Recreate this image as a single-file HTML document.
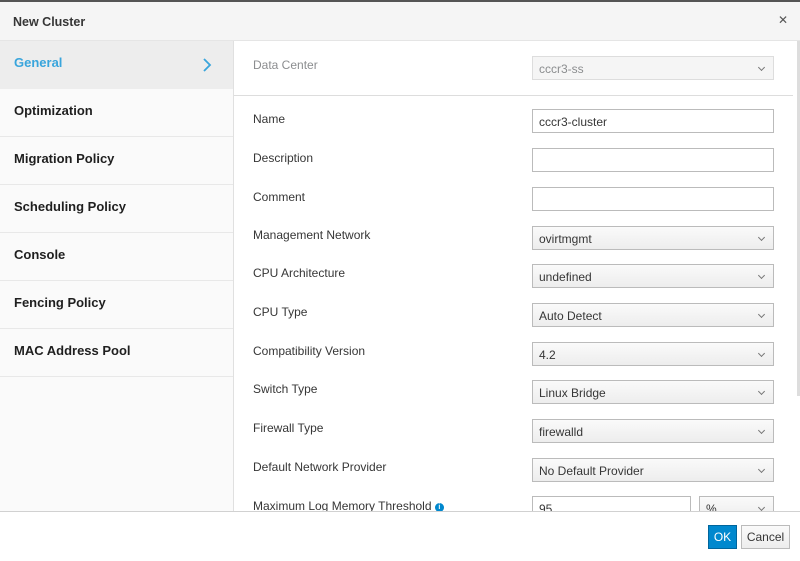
<!DOCTYPE html>
<html><head><meta charset="utf-8"><style>
*{margin:0;padding:0;box-sizing:border-box}
body{width:800px;height:561px;overflow:hidden;font-family:"Liberation Sans",sans-serif;background:#fff;position:relative;color:#363636}
.top{position:absolute;left:0;top:0;width:800px;height:2px;background:#555}
.hdr{position:absolute;left:0;top:2px;width:800px;height:39px;background:#f5f5f5;border-bottom:1px solid #e5e5e5}
.hdr b{position:absolute;left:13px;top:13px;font-size:12.5px;color:#363636}
.x{position:absolute;right:12px;top:11px;font-size:12px;color:#555}
.side{position:absolute;left:0;top:41px;width:234px;height:470px;background:#fafafa;border-right:1px solid #e0e0e0}
.it{height:48px;border-bottom:1px solid #e8e8e8;font-weight:bold;font-size:13px;padding:14px 0 0 14px;color:#1f1f1f}
.it.a{background:#ededed;color:#39a5dc;padding-top:14px;position:relative;border-bottom:none}
.main{position:absolute;left:234px;top:41px;width:560px;height:470px;background:#fff}
.sb{position:absolute;left:797px;top:41px;width:3px;height:355px;background:#ddd}
.lbl{position:absolute;left:253px;font-size:12px;color:#363636}
.f{position:absolute;left:532px;width:242px;height:24px;border:1px solid #bbb;background:#fff;font-size:12px;padding:5px 6px;color:#363636}
.s{background:linear-gradient(#fafafa,#ededed);border-color:#bbb}
.s:after{content:"";position:absolute;right:9px;top:8px;width:4px;height:4px;border-right:1px solid #777;border-bottom:1px solid #777;transform:rotate(45deg)}
.foot{position:absolute;left:0;top:511px;width:800px;height:50px;background:#fff;border-top:1px solid #d1d1d1}
.ok{position:absolute;left:708px;top:525px;width:29px;height:24px;background:#0088ce;border:1px solid #00659c;color:#fff;font-size:12px;text-align:center;line-height:22px}
.cn{position:absolute;left:741px;top:525px;width:49px;height:24px;background:linear-gradient(#fafafa,#ededed);border:1px solid #bbb;font-size:12px;text-align:center;line-height:22px}
</style></head><body>
<div class="top"></div>
<div class="hdr"><b>New Cluster</b><span class="x">✕</span></div>
<div class="side">
<div class="it a">General<svg style="position:absolute;left:202px;top:17px" width="10" height="14"><path d="M2 1l6 6-6 6" fill="none" stroke="#39a5dc" stroke-width="1.8"/></svg></div>
<div class="it">Optimization</div>
<div class="it">Migration Policy</div>
<div class="it">Scheduling Policy</div>
<div class="it">Console</div>
<div class="it">Fencing Policy</div>
<div class="it">MAC Address Pool</div>
</div>
<div class="main"></div>
<div style="position:absolute;left:234px;top:95px;width:559px;height:1px;background:#ddd"></div>
<div class="sb"></div>
<div class="lbl" style="top:58px;color:#8b8d8f">Data Center</div>
<div class="f s" style="top:56px;color:#8b8d8f;background:#f5f5f5;border-color:#ddd">cccr3-ss</div>
<div class="lbl" style="top:112px">Name</div><div class="f" style="top:109px">cccr3-cluster</div>
<div class="lbl" style="top:151px">Description</div><div class="f" style="top:148px"></div>
<div class="lbl" style="top:190px">Comment</div><div class="f" style="top:187px"></div>
<div class="lbl" style="top:228px">Management Network</div><div class="f s" style="top:226px">ovirtmgmt</div>
<div class="lbl" style="top:266px">CPU Architecture</div><div class="f s" style="top:264px">undefined</div>
<div class="lbl" style="top:305px">CPU Type</div><div class="f s" style="top:303px">Auto Detect</div>
<div class="lbl" style="top:344px">Compatibility Version</div><div class="f s" style="top:342px">4.2</div>
<div class="lbl" style="top:382px">Switch Type</div><div class="f s" style="top:380px">Linux Bridge</div>
<div class="lbl" style="top:421px">Firewall Type</div><div class="f s" style="top:419px">firewalld</div>
<div class="lbl" style="top:460px">Default Network Provider</div><div class="f s" style="top:458px">No Default Provider</div>
<div class="lbl" style="top:499px">Maximum Log Memory Threshold <span style="display:inline-block;width:9px;height:9px;border-radius:50%;background:#0088ce;color:#fff;font-size:7px;text-align:center;line-height:9px;font-weight:bold;vertical-align:1px">i</span></div>
<div class="f" style="top:496px;width:159px">95</div>
<div class="f s" style="top:496px;left:699px;width:75px">%</div>
<div class="foot"></div>
<div class="ok">OK</div><div class="cn">Cancel</div>
</body></html>
